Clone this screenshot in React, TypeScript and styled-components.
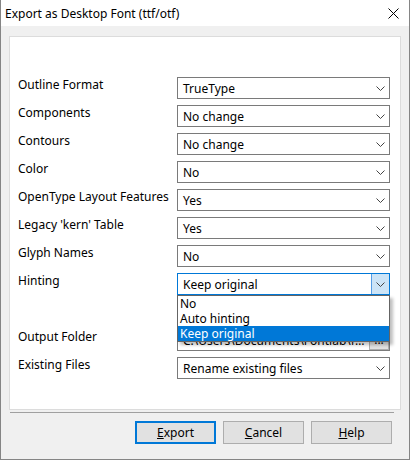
import React from 'react';
import styled, { createGlobalStyle } from 'styled-components';

const GlobalStyle = createGlobalStyle`
  body {
    margin: 0;
    font-family: "Noto Sans", "Liberation Sans", sans-serif;
    font-size: 12px;
    color: #000;
  }
`;

type Row = { label: string; value: string };

const ROWS: Row[] = [
  { label: 'Outline Format', value: 'TrueType' },
  { label: 'Components', value: 'No change' },
  { label: 'Contours', value: 'No change' },
  { label: 'Color', value: 'No' },
  { label: 'OpenType Layout Features', value: 'Yes' },
  { label: "Legacy 'kern' Table", value: 'Yes' },
  { label: 'Glyph Names', value: 'No' },
];

const HINTING_OPTIONS = ['No', 'Auto hinting', 'Keep original'];

function Chevron() {
  return (
    <svg width="9" height="5" viewBox="0 0 9 5">
      <polyline points="0.5,0.5 4.5,4.5 8.5,0.5" fill="none" stroke="#444" strokeWidth="1" />
    </svg>
  );
}

function Select({ value, focused }: { value: string; focused?: boolean }) {
  return (
    <SelectBox $focused={focused}>
      <SelectText>{value}</SelectText>
      <ArrowBox $focused={focused}>
        <Chevron />
      </ArrowBox>
    </SelectBox>
  );
}

export default function App() {
  return (
    <>
      <GlobalStyle />
      <Window>
        <TitleBar>
          <Title>Export as Desktop Font (ttf/otf)</Title>
          <svg width="11" height="11" viewBox="0 0 11 11">
            <path d="M0.5 0.5 L10.5 10.5 M10.5 0.5 L0.5 10.5" stroke="#000" strokeWidth="1" />
          </svg>
        </TitleBar>
        <Body>
          <Panel>
            {ROWS.map((row) => (
              <React.Fragment key={row.label}>
                <Label>{row.label}</Label>
                <Select value={row.value} />
              </React.Fragment>
            ))}
            <Label>Hinting</Label>
            <Anchor>
              <Select value="Keep original" focused />
              <Popup>
                {HINTING_OPTIONS.map((opt) => (
                  <PopupItem key={opt} $selected={opt === 'Keep original'}>
                    {opt}
                  </PopupItem>
                ))}
              </Popup>
            </Anchor>
            <Spacer />
            <Label>Output Folder</Label>
            <FolderField>
              <FolderText>C:\Users\Documents\Fontlab\fonts (default)\output</FolderText>
              <BrowseButton>...</BrowseButton>
            </FolderField>
            <Label>Existing Files</Label>
            <Select value="Rename existing files" />
          </Panel>
          <Separator />
          <Footer>
            <Button $default>
              <u>E</u>xport
            </Button>
            <Button>
              <u>C</u>ancel
            </Button>
            <Button>
              <u>H</u>elp
            </Button>
          </Footer>
        </Body>
      </Window>
    </>
  );
}

const Window = styled.div`
  width: 410px;
  height: 460px;
  box-sizing: border-box;
  background: #f0f0f0;
  border: 1px solid #858585;
  border-top: none;
  display: flex;
  flex-direction: column;
`;

const TitleBar = styled.div`
  height: 26px;
  background: #fff;
  display: flex;
  align-items: center;
  justify-content: space-between;
  padding: 0 10px 0 4px;
  flex-shrink: 0;
`;

const Title = styled.div`
  font-size: 12px;
`;

const Body = styled.div`
  flex: 1;
  padding: 10px 8px 0 8px;
  display: flex;
  flex-direction: column;
`;

const Panel = styled.div`
  height: 374px;
  box-sizing: border-box;
  background: #fff;
  border: 1px solid #dcdcdc;
  padding: 40px 0 0 8px;
  display: grid;
  grid-template-columns: 159px 213px;
  grid-auto-rows: 22px;
  row-gap: 6px;
  align-content: start;
`;

const Label = styled.div`
  line-height: 16px;
  margin-top: 0px;
  white-space: nowrap;
`;

const Anchor = styled.div`
  position: relative;
`;

const SelectBox = styled.div<{ $focused?: boolean }>`
  height: 22px;
  box-sizing: border-box;
  border: 1px solid ${(p) => (p.$focused ? '#0078d7' : '#7a7a7a')};
  background: #fff;
  display: flex;
  align-items: stretch;
`;

const SelectText = styled.div`
  flex: 1;
  display: flex;
  align-items: center;
  padding-left: 5px;
  white-space: nowrap;
  overflow: hidden;
`;

const ArrowBox = styled.div<{ $focused?: boolean }>`
  width: 17px;
  display: flex;
  align-items: center;
  justify-content: center;
  background: ${(p) => (p.$focused ? '#cce4f7' : 'transparent')};
  border-left: 1px solid ${(p) => (p.$focused ? '#569de5' : 'transparent')};
`;

const Popup = styled.div`
  position: absolute;
  top: 100%;
  left: 0;
  width: 213px;
  box-sizing: border-box;
  background: #fff;
  border: 1px solid #646464;
  box-shadow: 3px 3px 3px rgba(0, 0, 0, 0.25);
  z-index: 2;
`;

const PopupItem = styled.div<{ $selected?: boolean }>`
  height: 15px;
  line-height: 15px;
  padding-left: 2px;
  background: ${(p) => (p.$selected ? '#0078d7' : '#fff')};
  color: ${(p) => (p.$selected ? '#fff' : '#000')};
`;

const Spacer = styled.div`
  grid-column: 1 / span 2;
`;

const FolderField = styled.div`
  height: 22px;
  box-sizing: border-box;
  border: 1px solid #7a7a7a;
  display: flex;
  align-items: center;
  padding-left: 5px;
`;

const FolderText = styled.div`
  flex: 1;
  white-space: nowrap;
  overflow: hidden;
  text-overflow: ellipsis;
`;

const BrowseButton = styled.div`
  width: 20px;
  height: 20px;
  box-sizing: border-box;
  border: 1px solid #adadad;
  background: #e1e1e1;
  display: flex;
  align-items: center;
  justify-content: center;
  line-height: 1;
`;

const Separator = styled.div`
  height: 1px;
  margin: 2px 7px 0 1px;
  background: #a0a0a0;
`;

const Footer = styled.div`
  display: flex;
  justify-content: flex-end;
  gap: 7px;
  padding: 8px 9px 0 0;
`;

const Button = styled.div<{ $default?: boolean }>`
  width: 81px;
  height: 23px;
  box-sizing: border-box;
  background: #e1e1e1;
  border: ${(p) => (p.$default ? '2px solid #0078d7' : '1px solid #adadad')};
  display: flex;
  align-items: center;
  justify-content: center;
`;
